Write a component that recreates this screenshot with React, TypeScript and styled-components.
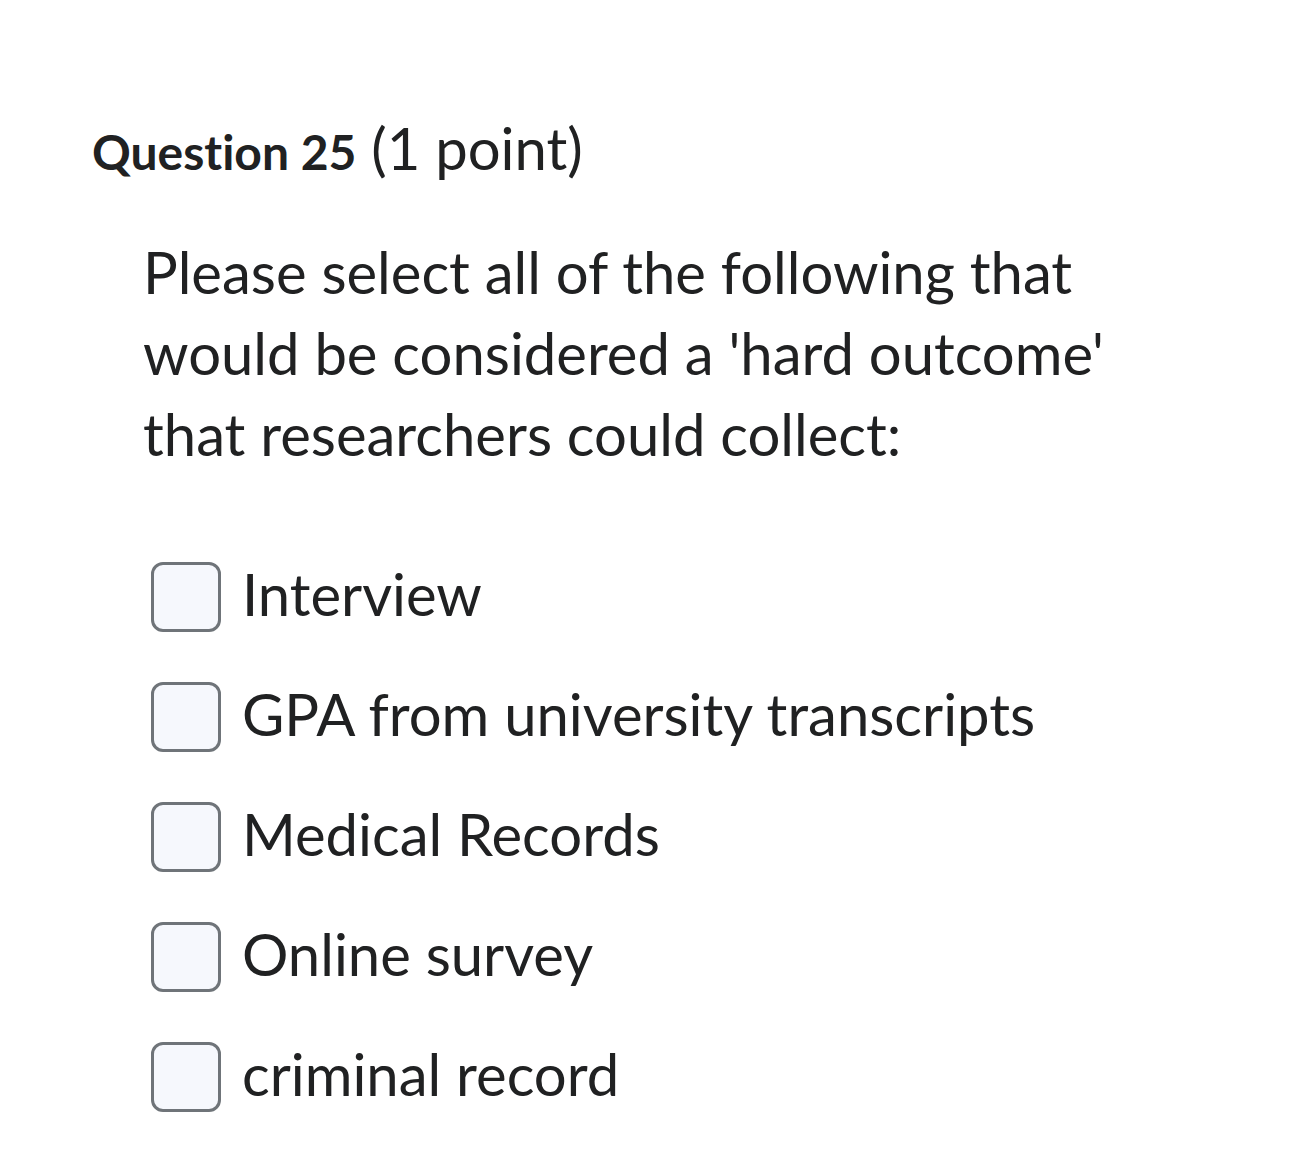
import React from "react";
import styled, { createGlobalStyle } from "styled-components";

const GlobalStyle = createGlobalStyle`
  html, body {
    margin: 0;
    padding: 0;
    background: #ffffff;
  }
  body {
    font-family: Lato, "Noto Sans", sans-serif;
    color: #202122;
    font-variant-ligatures: none;
  }
`;

const Page = styled.div`
  width: 1290px;
  min-height: 1171px;
  box-sizing: border-box;
  padding: 115px 0 0 92px;
`;

const Heading = styled.h2`
  margin: 0;
  font-size: 58px;
  line-height: 66px;
  font-weight: 400;
  color: #202122;
`;

const Strong = styled.span`
  font-weight: 700;
  font-size: 48px;
`;

const Prompt = styled.p`
  margin: 46px 0 0 51px;
  font-size: 58px;
  line-height: 81px;
  max-width: 1000px;
  color: #202122;
`;

const Options = styled.ul`
  list-style: none;
  margin: 88px 0 0 59px;
  padding: 0;
  display: flex;
  flex-direction: column;
  gap: 50px;
`;

const Option = styled.li`
  display: flex;
  align-items: center;
  gap: 21px;
  height: 70px;
`;

const Box = styled.span`
  flex: none;
  width: 70px;
  height: 70px;
  box-sizing: border-box;
  border: 3px solid #6f7479;
  border-radius: 12px;
  background: #f6f8fd;
`;

const Label = styled.span`
  font-size: 58px;
  line-height: 70px;
  color: #202122;
  margin-top: -6px;
`;

const choices = [
  "Interview",
  "GPA from university transcripts",
  "Medical Records",
  "Online survey",
  "criminal record",
];

export default function App() {
  return (
    <Page>
      <GlobalStyle />
      <Heading>
        <Strong>Question 25</Strong> (1 point)
      </Heading>
      <Prompt>
        Please select all of the following that would be considered a 'hard outcome'
        that researchers could collect:
      </Prompt>
      <Options>
        {choices.map((c) => (
          <Option key={c}>
            <Box />
            <Label>{c}</Label>
          </Option>
        ))}
      </Options>
    </Page>
  );
}
